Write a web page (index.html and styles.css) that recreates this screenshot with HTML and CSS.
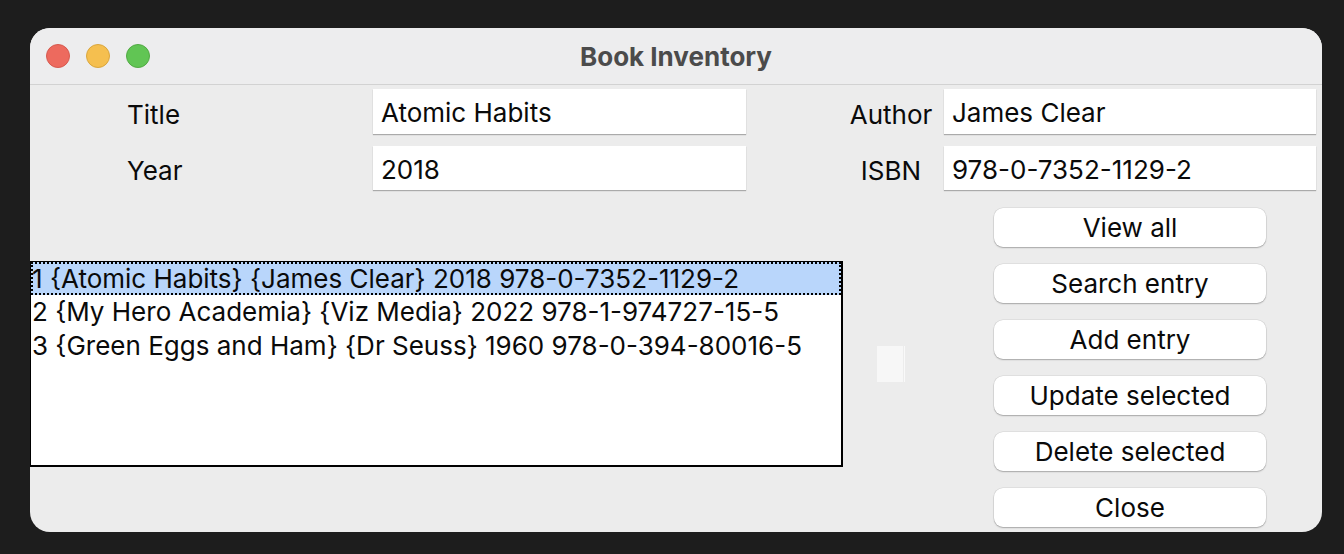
FILE: index.html
```html
<!DOCTYPE html>
<html>
<head>
<meta charset="utf-8">
<title>Book Inventory</title>
<link rel="stylesheet" href="styles.css">
</head>
<body>
<div class="window">
  <div class="titlebar">
    <div class="lights">
      <span class="light red"></span>
      <span class="light yellow"></span>
      <span class="light green"></span>
    </div>
    <div class="title">Book Inventory</div>
    <div></div>
  </div>
  <div class="form">
    <div class="label label-left">Title</div>
    <div class="entry">Atomic Habits</div>
    <div class="label label-right">Author</div>
    <div class="entry">James Clear</div>
    <div class="label label-left">Year</div>
    <div class="entry">2018</div>
    <div class="label label-right">ISBN</div>
    <div class="entry">978-0-7352-1129-2</div>
  </div>
  <div class="lower">
    <div class="listbox">
      <div class="row selected">1 {Atomic Habits} {James Clear} 2018 978-0-7352-1129-2</div>
      <div class="row">2 {My Hero Academia} {Viz Media} 2022 978-1-974727-15-5</div>
      <div class="row">3 {Green Eggs and Ham} {Dr Seuss} 1960 978-0-394-80016-5</div>
    </div>
    <div class="scrollstub"></div>
    <div class="buttons">
      <div class="btn">View all</div>
      <div class="btn">Search entry</div>
      <div class="btn">Add entry</div>
      <div class="btn">Update selected</div>
      <div class="btn">Delete selected</div>
      <div class="btn">Close</div>
    </div>
  </div>
</div>
</body>
</html>
```
FILE: styles.css
```css
html, body {
  margin: 0;
  padding: 0;
}
body {
  background: #1d1d1d;
  width: 1344px;
  height: 554px;
  overflow: hidden;
  font-family: Inter, "Liberation Sans", sans-serif;
  color: #0a0a0a;
}
.window {
  margin: 28px 0 0 30px;
  width: 1292px;
  height: 504px;
  background: #ececec;
  border-radius: 20px;
  overflow: hidden;
}
.titlebar {
  height: 56px;
  border-bottom: 1px solid #d2d2d2;
  background: #ededee;
  display: grid;
  grid-template-columns: 1fr auto 1fr;
  align-items: center;
}
.lights {
  display: flex;
  gap: 16px;
  padding-left: 16px;
}
.light {
  width: 24px;
  height: 24px;
  border-radius: 50%;
  box-sizing: border-box;
}
.red { background: #ed6a5e; border: 1px solid #d55a4f; }
.yellow { background: #f5bf4f; border: 1px solid #d9a63e; }
.green { background: #61c554; border: 1px solid #52a944; }
.title {
  font-weight: 700;
  font-size: 26px;
  color: #4b4b4b;
}
.form {
  display: grid;
  grid-template-columns: 343px 373px 198px 372px;
  grid-template-rows: 45px 44px;
  row-gap: 12px;
  margin-top: 4px;
  font-size: 26px;
}
.label {
  display: flex;
  align-items: center;
  color: #0a0a0a;
}
.label-left {
  padding-left: 97px;
  padding-top: 5px;
}
.label-right {
  justify-content: center;
  padding-left: 92px;
  padding-top: 5px;
}
.entry {
  background: #fff;
  display: flex;
  align-items: center;
  padding-left: 8px;
  padding-top: 2px;
  box-shadow: 0 1px 1px rgba(0, 0, 0, 0.28);
  color: #0a0a0a;
}
.lower {
  display: flex;
  align-items: flex-start;
}
.listbox {
  margin-top: 71px;
  width: 810px;
  height: 203px;
  background: #fff;
  border-left: 1px solid #000;
  border-right: 2px solid #000;
  border-bottom: 2px solid #000;
  border-top: 1px solid #000;
  font-size: 26px;
}
.row {
  height: 34px;
  line-height: 34px;
  padding-left: 1px;
  white-space: nowrap;
  box-sizing: border-box;
}
.row.selected {
  background: #b9d6fb;
  outline: 2px dotted #000;
  outline-offset: -2px;
  height: 33px;
  line-height: 34px;
}
.scrollstub {
  margin-top: 156px;
  margin-left: 34px;
  width: 26px;
  height: 36px;
  padding-right: 1px;
  background: #f7f7f7;
  background-clip: content-box;
  border-right: 1px solid #f9f9f9;
}
.buttons {
  margin-top: 18px;
  margin-left: 89px;
  width: 272px;
  display: flex;
  flex-direction: column;
  gap: 17px;
}
.btn {
  height: 39px;
  background: #fff;
  border-radius: 9px;
  box-shadow: 0 0 0 0.5px rgba(0, 0, 0, 0.1), 0 1px 1.5px rgba(0, 0, 0, 0.25);
  display: flex;
  align-items: center;
  justify-content: center;
  font-size: 26px;
  color: #0a0a0a;
}
```
